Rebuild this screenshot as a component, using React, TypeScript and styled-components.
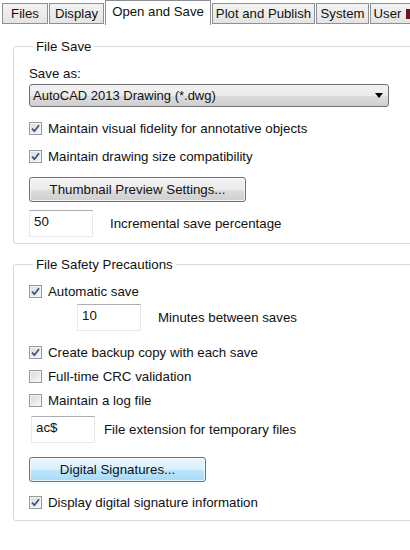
import React from 'react';
import styled, {createGlobalStyle} from 'styled-components';

const GlobalStyle = createGlobalStyle`
  html, body {
    margin: 0;
    padding: 0;
    background: #fff;
    overflow: hidden;
  }
  body {
    font-family: "Liberation Sans", Arial, sans-serif;
    font-size: 13.3px;
    color: #111;
  }
`

const Page = styled.div`
  width: 410px;
  height: 550px;
  display: flex;
  flex-direction: column;
  overflow: hidden;
`

const TabStrip = styled.div`
  display: flex;
  align-items: flex-end;
  height: 24px;
  padding-left: 2px;
  gap: 1px;
  white-space: nowrap;
`

const Tab = styled.div<{ selected?: boolean; width: number }>`
  display: flex;
  align-items: center;
  justify-content: center;
  box-sizing: border-box;
  width: ${({width}) => width}px;
  height: ${({selected}) => selected ? '25px' : '21px'};
  padding-bottom: ${({selected}) => selected ? '3px' : '0'};
  margin-bottom: ${({selected}) => selected ? '-1px' : '0'};
  border: 1px solid #8d8f92;
  border-bottom: ${({selected}) => selected ? 'none' : '1px solid #8d8f92'};
  background: ${({selected}) => selected ? '#fff' : 'linear-gradient(#f3f3f3, #e4e4e4)'};
  font-size: 13.2px;
  flex-shrink: 0;
`

const Marker = styled.span`
  display: inline-block;
  width: 4px;
  height: 10px;
  margin-left: 5px;
  background: #6b1421;
`

const Content = styled.div`
  display: flex;
  flex-direction: column;
  padding: 15px 0 0 13px;
`

const Group = styled.fieldset<{ gapTop?: number }>`
  margin: ${({gapTop}) => gapTop ?? 0}px -20px 0 0;
  padding: 0 0 ${({gapTop}) => gapTop ? 10 : 6}px 15px;
  border: 1px solid #d5dadd;
  border-radius: 3px;
  display: flex;
  flex-direction: column;
  align-items: flex-start;
`

const Legend = styled.legend`
  padding: 0 3px;
  margin-left: 4px;
  line-height: 15px;
`

const Text = styled.div<{ top: number }>`
  margin-top: ${({top}) => top}px;
  line-height: 15px;
`

const Select = styled.div`
  margin-top: 3px;
  box-sizing: border-box;
  width: 360px;
  height: 23px;
  display: flex;
  align-items: center;
  justify-content: space-between;
  padding: 0 5px 0 3px;
  border: 1px solid #707070;
  border-radius: 3px;
  background: linear-gradient(#f2f2f2 0%, #ebebeb 50%, #dddddd 51%, #cfcfcf 100%);
  font-size: 13px;
`

const Row = styled.label<{ top: number }>`
  display: flex;
  align-items: center;
  gap: 6px;
  height: 15px;
  margin-top: ${({top}) => top}px;
`

const Box = styled.span`
  box-sizing: border-box;
  width: 13px;
  height: 13px;
  border: 1px solid #979a9c;
  background: linear-gradient(135deg, #dadada, #f7f7f7);
  box-shadow: inset 0 0 0 1px #f4f4f4;
  display: flex;
  align-items: center;
  justify-content: center;
`

const Button = styled.div<{ top: number; width: number; hot?: boolean }>`
  margin-top: ${({top}) => top}px;
  box-sizing: border-box;
  width: ${({width}) => width}px;
  height: 25px;
  display: flex;
  align-items: center;
  justify-content: center;
  border: 1px solid ${({hot}) => hot ? '#3c7fb1' : '#707070'};
  border-radius: 3px;
  background: ${({hot}) => hot
    ? 'linear-gradient(#eaf6fd 0%, #d9f0fc 50%, #bee6fd 51%, #a7d9f5 100%)'
    : 'linear-gradient(#f2f2f2 0%, #ebebeb 50%, #dddddd 51%, #cfcfcf 100%)'};
  box-shadow: inset 0 0 0 1px rgba(255, 255, 255, 0.7);
`

const FieldRow = styled.div<{ top: number; indent?: number; labelGap: number }>`
  display: flex;
  align-items: center;
  gap: ${({labelGap}) => labelGap}px;
  margin-top: ${({top}) => top}px;
  margin-left: ${({indent}) => indent ?? 0}px;
`

const Input = styled.div`
  box-sizing: border-box;
  width: 64px;
  height: 27px;
  padding: 3px 0 0 4px;
  border: 1px solid #e3e9ef;
  border-top-color: #abadb3;
  background: #fff;
`

const Check = ({checked}: { checked: boolean }) => (
  <Box>
    {checked && (
      <svg width="9" height="9" viewBox="0 0 9 9">
        <path d="M1 4.6 L3.4 7.2 L8 1.2" fill="none" stroke="#3d5287" strokeWidth="1.8" />
      </svg>
    )}
  </Box>
)

type CheckProps = { label: string; checked: boolean; top: number }
const CheckItem = ({label, checked, top}: CheckProps) => (
  <Row top={top}>
    <Check checked={checked} />
    <span>{label}</span>
  </Row>
)

const tabs = [
  {label: 'Files', width: 46},
  {label: 'Display', width: 55},
  {label: 'Open and Save', width: 106, selected: true},
  {label: 'Plot and Publish', width: 103},
  {label: 'System', width: 53},
]

const App = () => (
  <Page>
    <GlobalStyle />
    <TabStrip>
      {tabs.map(t => <Tab key={t.label} width={t.width} selected={t.selected}>{t.label}</Tab>)}
      <Tab width={44}>User<Marker /></Tab>
    </TabStrip>
    <Content>
      <Group>
        <Legend>File Save</Legend>
        <Text top={12}>Save as:</Text>
        <Select>
          <span>AutoCAD 2013 Drawing (*.dwg)</span>
          <svg width="8" height="5" viewBox="0 0 8 5">
            <path d="M0 0 H8 L4 5 Z" fill="#000" />
          </svg>
        </Select>
        <CheckItem top={14} checked label="Maintain visual fidelity for annotative objects" />
        <CheckItem top={13} checked label="Maintain drawing size compatibility" />
        <Button top={13} width={217}>Thumbnail Preview Settings...</Button>
        <FieldRow top={8} labelGap={17}>
          <Input>50</Input>
          <span>Incremental save percentage</span>
        </FieldRow>
      </Group>
      <Group gapTop={13}>
        <Legend>File Safety Precautions</Legend>
        <CheckItem top={12} checked label="Automatic save" />
        <FieldRow top={5} indent={48} labelGap={17}>
          <Input>10</Input>
          <span>Minutes between saves</span>
        </FieldRow>
        <CheckItem top={14} checked label="Create backup copy with each save" />
        <CheckItem top={9} checked={false} label="Full-time CRC validation" />
        <CheckItem top={9} checked={false} label="Maintain a log file" />
        <FieldRow top={8} indent={2} labelGap={9}>
          <Input>ac$</Input>
          <span>File extension for temporary files</span>
        </FieldRow>
        <Button top={14} width={177} hot>Digital Signatures...</Button>
        <CheckItem top={13} checked label="Display digital signature information" />
      </Group>
    </Content>
  </Page>
);

export default App;
